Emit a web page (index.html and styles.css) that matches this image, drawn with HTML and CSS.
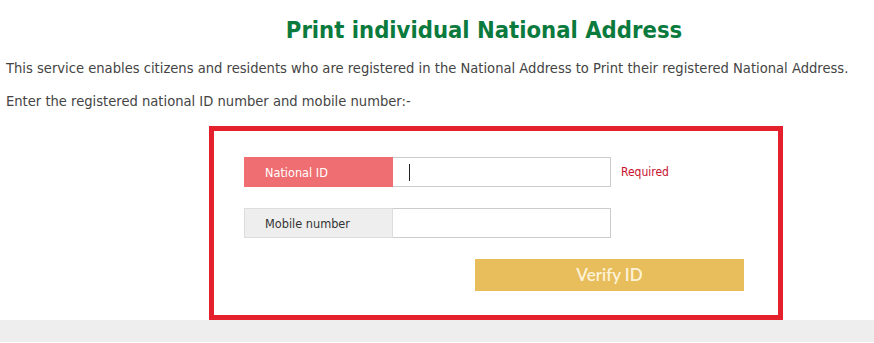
FILE: index.html
```html
<!DOCTYPE html>
<html>
<head>
<meta charset="utf-8">
<link rel="stylesheet" href="styles.css">
</head>
<body>
<div class="page">
  <h1 class="title">Print individual National Address</h1>
  <p class="intro">This service enables citizens and residents who are registered in the National Address to Print their registered National Address.</p>
  <p class="intro second">Enter the registered national ID number and mobile number:-</p>
  <div class="form-box">
    <div class="row">
      <div class="label label-error">National ID</div>
      <div class="input"><span class="caret"></span></div>
      <span class="required">Required</span>
    </div>
    <div class="row">
      <div class="label">Mobile number</div>
      <div class="input"></div>
    </div>
    <div class="actions">
      <div class="btn">Verify ID</div>
    </div>
  </div>
</div>
<div class="footer"></div>
</body>
</html>
```
FILE: styles.css
```css
html, body {
  margin: 0;
  padding: 0;
  background: #fff;
  font-family: "DejaVu Sans Condensed", "DejaVu Sans", Tahoma, sans-serif;
}
.page {
  padding: 0 6px;
}
.title {
  margin: 0;
  padding: 14px 0 0 94px;
  text-align: center;
  color: #0b7a3d;
  font-size: 23.6px;
  font-weight: bold;
  line-height: 32px;
}
.intro {
  margin: 13px 0 0 0;
  color: #444;
  font-size: 14.6px;
  line-height: 18px;
  white-space: nowrap;
}
.intro.second {
  margin-top: 15px;
}
.form-box {
  box-sizing: border-box;
  margin: 16px 0 0 203px;
  width: 574px;
  height: 194px;
  border: 5px solid #e3202b;
  padding: 26px 0 0 30px;
}
.row {
  display: flex;
  align-items: center;
  height: 30px;
  margin-bottom: 21px;
}
.label {
  box-sizing: border-box;
  width: 149px;
  height: 30px;
  padding-left: 20px;
  display: flex;
  align-items: center;
  font-size: 12.6px;
  color: #333;
  background: #eeeeee;
  border: 1px solid #dddddd;
}
.label-error {
  background: #ef6e71;
  border-color: #ef6e71;
  color: #fff;
}
.input {
  box-sizing: border-box;
  width: 218px;
  height: 30px;
  border: 1px solid #cccccc;
  border-left: none;
  display: flex;
  align-items: center;
  padding-left: 16px;
}
.caret {
  width: 1px;
  height: 17px;
  background: #222;
}
.required {
  margin-left: 10px;
  font-size: 12px;
  color: #c8102e;
}
.actions {
  padding-left: 231px;
}
.btn {
  width: 269px;
  height: 32px;
  background: #e8bd5c;
  color: #fdf3d8;
  font-size: 17px;
  font-weight: 600;
  text-align: center;
  line-height: 32px;
  font-family: "Lato", sans-serif;
}
.footer {
  background: #eeeeee;
  height: 22px;
}
```
